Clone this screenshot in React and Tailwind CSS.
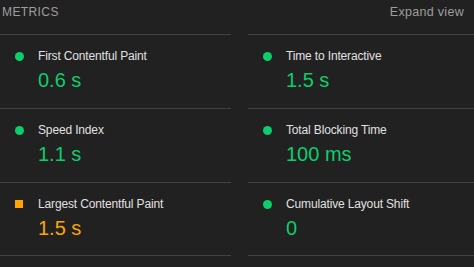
const METRICS = [
  { title: 'First Contentful Paint', value: '0.6 s', status: 'pass' },
  { title: 'Time to Interactive', value: '1.5 s', status: 'pass' },
  { title: 'Speed Index', value: '1.1 s', status: 'pass' },
  { title: 'Total Blocking Time', value: '100 ms', status: 'pass' },
  { title: 'Largest Contentful Paint', value: '1.5 s', status: 'average' },
  { title: 'Cumulative Layout Shift', value: '0', status: 'pass' },
];

const Metric = ({ metric, last }) => {
  const pass = metric.status === 'pass';
  return (
    <div
      className={`h-[74px] border-t border-[#424242] ${last ? 'border-b' : ''} flex flex-col`}
    >
      <div className="flex items-center mt-[13px] h-[16px]">
        {pass ? (
          <span className="ml-[15px] w-[9px] h-[9px] rounded-full bg-[#0cce6b]" />
        ) : (
          <span className="ml-[15px] w-[8px] h-[8px] bg-[#ffa400]" />
        )}
        <span className={`${pass ? 'ml-[14px]' : 'ml-[15px]'} text-[12px] tracking-[-0.15px] text-[#e0e0e0]`}>{metric.title}</span>
      </div>
      <div
        className={`ml-[38px] mt-[2px] text-[20px] leading-[28px] ${pass ? 'text-[#0cce6b]' : 'text-[#ffa400]'}`}
      >
        {metric.value}
      </div>
    </div>
  );
};

export default function App() {
  return (
    <div className="w-[474px] h-[267px] overflow-hidden bg-[#212121] font-['Liberation_Sans',Arial,sans-serif]">
      <div className="h-[34px] flex items-start justify-between pt-[4px]">
        <span className="ml-[2px] text-[12px] leading-[16px] tracking-[0.4px] text-[#9e9e9e]">METRICS</span>
        <span className="mr-[10px] text-[12.5px] leading-[16px] tracking-[0.3px] font-medium text-[#9e9e9e]">Expand view</span>
      </div>
      <div className="grid grid-cols-[231px_226px] gap-x-[17px]">
        {METRICS.map((m, i) => (
          <Metric key={m.title} metric={m} last={i >= 4} />
        ))}
      </div>
    </div>
  );
}
